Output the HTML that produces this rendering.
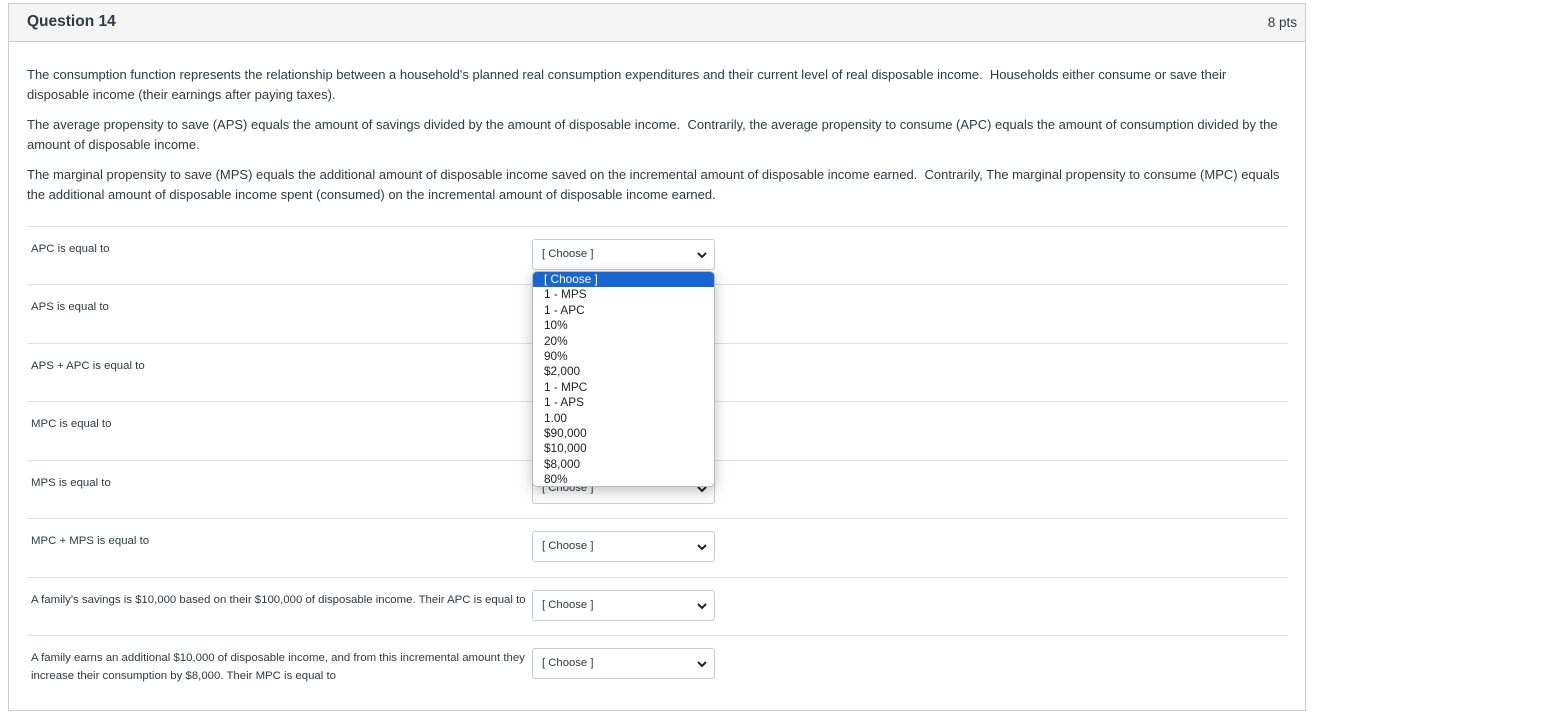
<!DOCTYPE html>
<html><head><style>
body{margin:0;background:#fff;font-family:"Liberation Sans",sans-serif;color:#2d3b45;}
.box{position:absolute;left:8px;top:3px;width:1296px;height:706px;border:1px solid #c7cdd1;}
.hdr{height:37px;background:#f5f5f5;border-bottom:1px solid #c7cdd1;position:relative;}
.hdr .t{position:absolute;left:18px;top:9px;font-size:15.5px;font-weight:bold;color:#2d3b45;}
.hdr .p{position:absolute;right:8px;top:11px;font-size:13.5px;color:#2d3b45;}
p{position:absolute;left:18px;width:1266px;margin:0;font-size:13px;line-height:20px;}
.row{position:absolute;left:18px;width:1261px;border-top:1px solid #dde1e4;height:58px;}
.lab{position:absolute;left:4px;top:13px;font-size:11.4px;line-height:18px;}
.sel{position:absolute;left:505px;top:12px;width:183px;height:31px;border:1px solid #c7cdd1;border-radius:3px;background:#fff;box-sizing:border-box;}
.sel span{position:absolute;left:9px;top:8px;font-size:11.3px;color:#2d3b45;}
.sel svg{position:absolute;right:7px;top:12px;}
.dd{position:absolute;left:532px;top:271px;width:183px;height:216px;background:#fff;border:1px solid #bbb;border-radius:5px;box-shadow:0 4px 14px rgba(0,0,0,.25);overflow:hidden;box-sizing:border-box;}
.dd div{height:15.4px;line-height:15.4px;font-size:11.8px;padding-left:11px;color:#222;}
.dd .h{background:#1a66d0;color:#fff;}
</style></head><body>
<div class="box">
<div class="hdr"><div class="t">Question 14</div><div class="p">8 pts</div></div>
<p style="top:61px;width:1240px">The consumption function represents the relationship between a household's planned real consumption expenditures and their current level of real disposable income.&nbsp; Households either consume or save their disposable income (their earnings after paying taxes).</p>
<p style="top:111px">The average propensity to save (APS) equals the amount of savings divided by the amount of disposable income.&nbsp; Contrarily, the average propensity to consume (APC) equals the amount of consumption divided by the amount of disposable income.</p>
<p style="top:161px">The marginal propensity to save (MPS) equals the additional amount of disposable income saved on the incremental amount of disposable income earned.&nbsp; Contrarily, The marginal propensity to consume (MPC) equals the additional amount of disposable income spent (consumed) on the incremental amount of disposable income earned.</p>
</div>
<div style="position:absolute;left:9px;top:0">
<div class="row" style="top:226px"><div class="lab">APC is equal to</div><div class="sel"><span>[ Choose ]</span><svg width="10" height="7"><path d="M1 1L5 5L9 1" stroke="#222" stroke-width="2" fill="none"/></svg></div></div>
<div class="row" style="top:284px"><div class="lab">APS is equal to</div></div>
<div class="row" style="top:343px"><div class="lab">APS + APC is equal to</div></div>
<div class="row" style="top:401px"><div class="lab">MPC is equal to</div></div>
<div class="row" style="top:460px"><div class="lab">MPS is equal to</div><div class="sel"><span>[ Choose ]</span><svg width="10" height="7"><path d="M1 1L5 5L9 1" stroke="#222" stroke-width="2" fill="none"/></svg></div></div>
<div class="row" style="top:518px"><div class="lab">MPC + MPS is equal to</div><div class="sel"><span>[ Choose ]</span><svg width="10" height="7"><path d="M1 1L5 5L9 1" stroke="#222" stroke-width="2" fill="none"/></svg></div></div>
<div class="row" style="top:577px"><div class="lab">A family's savings is $10,000 based on their $100,000 of disposable income. Their APC is equal to</div><div class="sel"><span>[ Choose ]</span><svg width="10" height="7"><path d="M1 1L5 5L9 1" stroke="#222" stroke-width="2" fill="none"/></svg></div></div>
<div class="row" style="top:635px"><div class="lab" style="width:502px">A family earns an additional $10,000 of disposable income, and from this incremental amount they increase their consumption by $8,000. Their MPC is equal to</div><div class="sel"><span>[ Choose ]</span><svg width="10" height="7"><path d="M1 1L5 5L9 1" stroke="#222" stroke-width="2" fill="none"/></svg></div></div>
</div>
<div class="dd"><div class="h">[ Choose ]</div><div>1 - MPS</div><div>1 - APC</div><div>10%</div><div>20%</div><div>90%</div><div>$2,000</div><div>1 - MPC</div><div>1 - APS</div><div>1.00</div><div>$90,000</div><div>$10,000</div><div>$8,000</div><div>80%</div></div>
</body></html>
